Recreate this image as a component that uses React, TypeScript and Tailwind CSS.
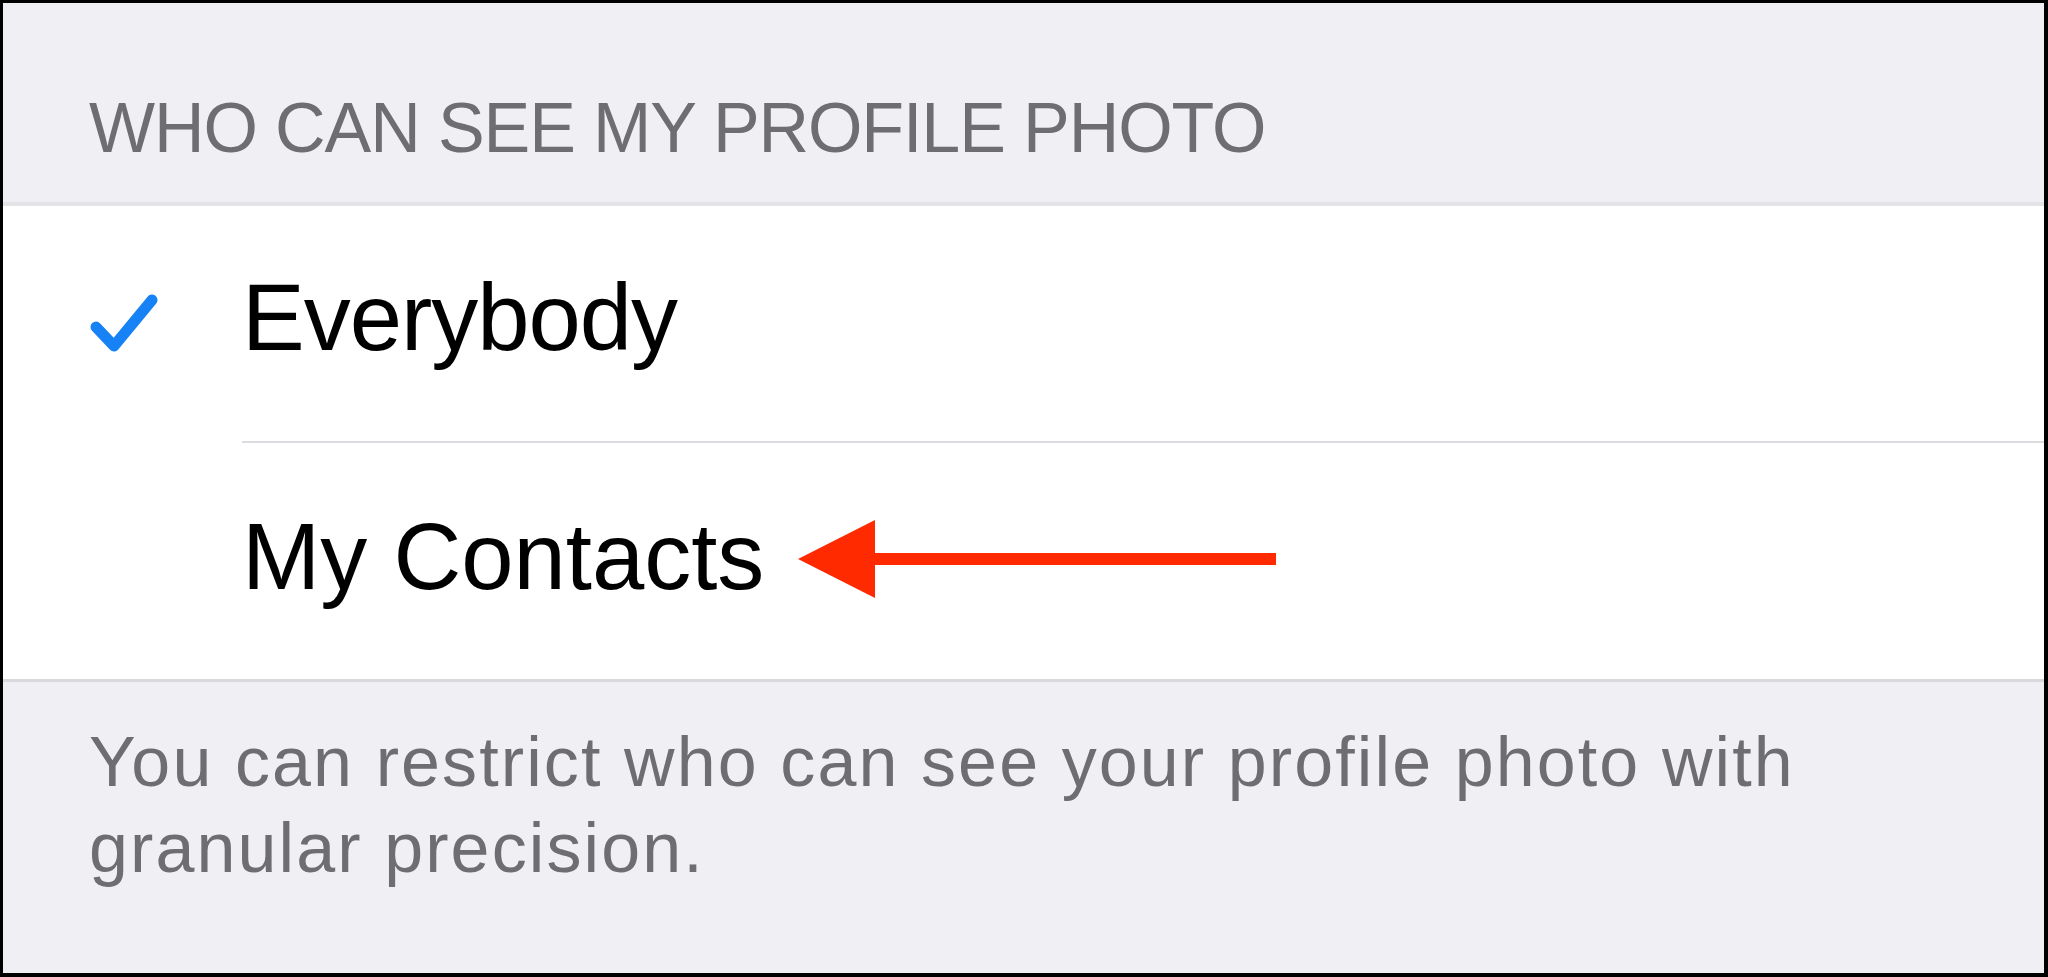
import React from "react";

const font = { fontFamily: '"Liberation Sans", Arial, sans-serif' };

export default function App() {
  return (
    <div
      className="w-[2048px] h-[977px] box-border border-black border-t-[3px] border-l-[3px] border-r-[4px] border-b-[4px] bg-[#efeff4] flex flex-col overflow-hidden"
      style={font}
    >
      {/* Header */}
      <div className="h-[203px] pt-[90px] pl-[86px] border-b-[4px] border-[#e4e4e8] shrink-0">
        <div className="text-[70px] leading-[70px] text-[#6d6d72] tracking-[-1.1px] whitespace-nowrap">
          WHO CAN SEE MY PROFILE PHOTO
        </div>
      </div>

      {/* Options */}
      <div className="bg-white shrink-0 relative">
        <div className="flex h-[237px]">
          <div className="w-[239px] shrink-0 flex items-start pt-[85px] pl-[86px]">
            <svg width="70" height="62" viewBox="0 0 70 62" fill="none">
              <path
                d="M7 36 L25 55 L63 9"
                stroke="#1682f6"
                strokeWidth="11"
                strokeLinecap="round"
                strokeLinejoin="round"
              />
            </svg>
          </div>
          <div className="flex-1 border-b-[2px] border-[#dcdce0] pt-[64px]">
            <div className="text-[94px] leading-[95px] text-black tracking-[-1px] whitespace-nowrap">
              Everybody
            </div>
          </div>
        </div>
        <div className="flex h-[236px]">
          <div className="w-[239px] shrink-0" />
          <div className="flex-1 pt-[66px]">
            <div className="text-[94px] leading-[95px] text-black tracking-[0px] whitespace-nowrap">
              My Contacts
            </div>
          </div>
        </div>
        {/* Arrow annotation */}
        <svg
          className="absolute left-[795px] top-[313px]"
          width="480"
          height="82"
          viewBox="0 0 480 82"
        >
          <polygon points="0,40 77,1 77,79" fill="#ff2a00" />
          <rect x="70" y="34" width="408" height="12" fill="#ff2a00" />
        </svg>
      </div>

      {/* Footer */}
      <div className="flex-1 border-t-[3px] border-[#d9d9dd] pt-[37px] pl-[86px]">
        <div className="text-[70px] leading-[86px] text-[#6d6d72] tracking-[2.1px] w-[1940px] whitespace-nowrap">
          You can restrict who can see your profile photo with
          <br />
          granular precision.
        </div>
      </div>
    </div>
  );
}
